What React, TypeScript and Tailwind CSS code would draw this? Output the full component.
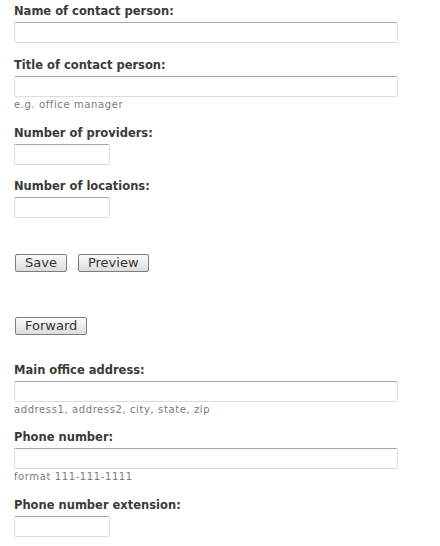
const font = { fontFamily: '"DejaVu Sans", Verdana, sans-serif' };

function Field({
  label,
  hint,
  short,
  className = '',
}: {
  label: string;
  hint?: string;
  short?: boolean;
  className?: string;
}) {
  return (
    <div className={className}>
      <label className="block text-[11.5px] leading-[16px] font-bold text-[#3a3a3a]">{label}</label>
      <input
        type="text"
        className={`mt-[3px] block h-[21px] rounded-[2px] border border-[#dcdde3] border-t-[#a8a8a8] bg-white px-1 text-[12px] outline-none ${
          short ? 'w-[96px]' : 'w-[384px]'
        }`}
      />
      {hint && (
        <div className="mt-[2px] text-[10px] leading-[12px] tracking-[0.6px] text-[#7a7a7a]">{hint}</div>
      )}
    </div>
  );
}

function Button({ children }: { children: string }) {
  return (
    <button
      type="button"
      className="h-[18px] rounded-[2px] border border-[#7c7c7c] bg-gradient-to-b from-[#fbfbfb] to-[#dcdcdc] px-[9px] text-[13px] leading-[14px] text-[#333]"
    >
      {children}
    </button>
  );
}

export default function App() {
  return (
    <div className="min-h-[546px] w-[440px] bg-white pl-[14px] pt-[3px]" style={font}>
      <Field label="Name of contact person:" />
      <Field label="Title of contact person:" hint="e.g. office manager" className="mt-[14px]" />
      <Field label="Number of providers:" short className="mt-[14px]" />
      <Field label="Number of locations:" short className="mt-[13px]" />

      <div className="mt-[36px] flex gap-[11px] pl-px">
        <Button>Save</Button>
        <Button>Preview</Button>
      </div>

      <div className="mt-[41px] pl-px">
        <Button>Forward</Button>
      </div>

      <Field label="Main office address:" hint="address1, address2, city, state, zip" className="mt-[25px]" />
      <Field label="Phone number:" hint="format 111-111-1111" className="mt-[13px]" />
      <Field label="Phone number extension:" short className="mt-[14px]" />
    </div>
  );
}
